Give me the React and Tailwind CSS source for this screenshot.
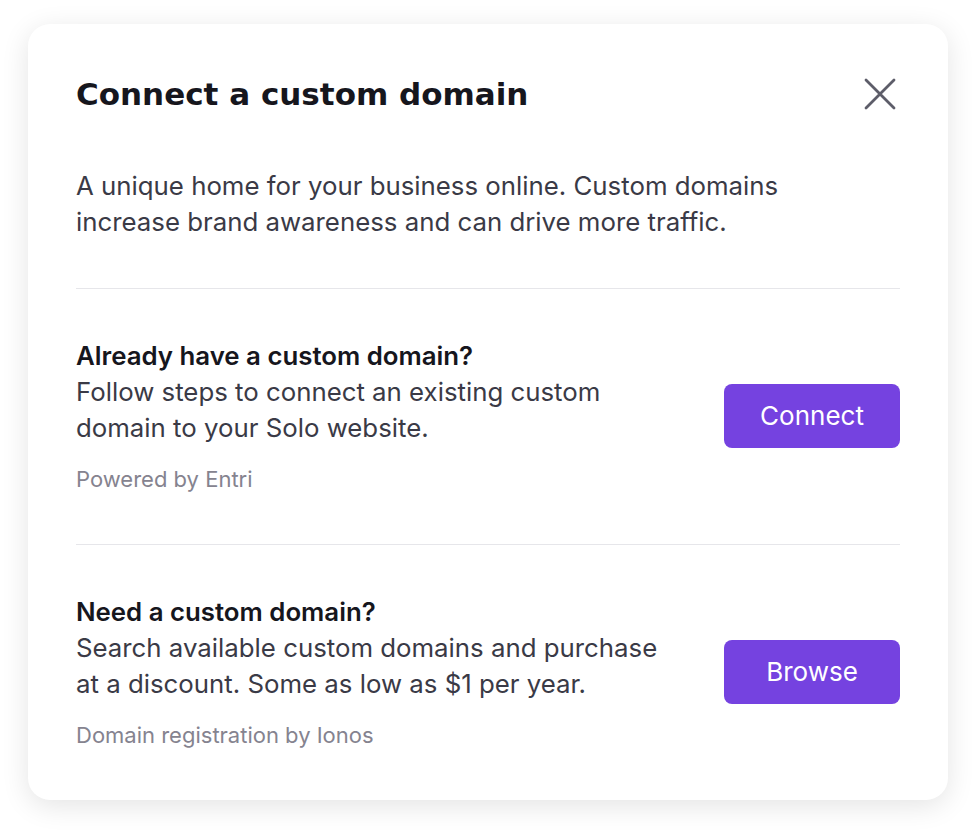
const sections = [
  {
    title: 'Already have a custom domain?',
    lines: ['Follow steps to connect an existing custom', 'domain to your Solo website.'],
    note: 'Powered by Entri',
    action: 'Connect',
  },
  {
    title: 'Need a custom domain?',
    lines: ['Search available custom domains and purchase', 'at a discount. Some as low as $1 per year.'],
    note: 'Domain registration by Ionos',
    action: 'Browse',
  },
]

export default function App() {
  return (
    <div className="min-h-screen bg-white p-[28px] pt-[24px]" style={{ fontFamily: 'Inter, sans-serif' }}>
      <div className="w-[920px] rounded-[22px] bg-white px-12 pt-[50px] shadow-[0_6px_28px_rgba(0,0,0,0.11)]">
        {/* Header */}
        <div className="flex h-10 items-center justify-between">
          <h1 className="text-[31px] font-bold text-[#16161d]" style={{ fontFamily: '"DejaVu Sans", sans-serif' }}>
            Connect a custom domain
          </h1>
          <button className="flex h-10 w-10 items-center justify-center text-[#5d5d69]">
            <svg width="32" height="32" viewBox="0 0 32 32" fill="none" stroke="currentColor" strokeWidth="2.8" strokeLinecap="round">
              <path d="M2 2L30 30M30 2L2 30" />
            </svg>
          </button>
        </div>

        <p className="mt-[54px] text-[25.8px] leading-[36px] text-[#3a3a46]">
          A unique home for your business online. Custom domains
          <br />
          increase brand awareness and can drive more traffic.
        </p>

        {sections.map((s, i) => (
          <div
            key={s.title}
            className={`flex items-center justify-between border-t border-[#e6e6ea] pt-[49px] pb-[51px] ${i === 0 ? 'mt-[48px]' : ''}`}
          >
            <div>
              <h2 className="text-[25.8px] leading-[36px] font-semibold text-[#16161d]">{s.title}</h2>
              <p className="text-[25.8px] leading-[36px] text-[#3a3a46]">
                {s.lines[0]}
                <br />
                {s.lines[1]}
              </p>
              <p className="mt-[19px] text-[22px] leading-[28px] text-[#85838f]">{s.note}</p>
            </div>
            <button className="flex h-16 w-[176px] items-center justify-center rounded-lg bg-[#7542e0] text-[26px] text-white">
              {s.action}
            </button>
          </div>
        ))}
      </div>
    </div>
  )
}
